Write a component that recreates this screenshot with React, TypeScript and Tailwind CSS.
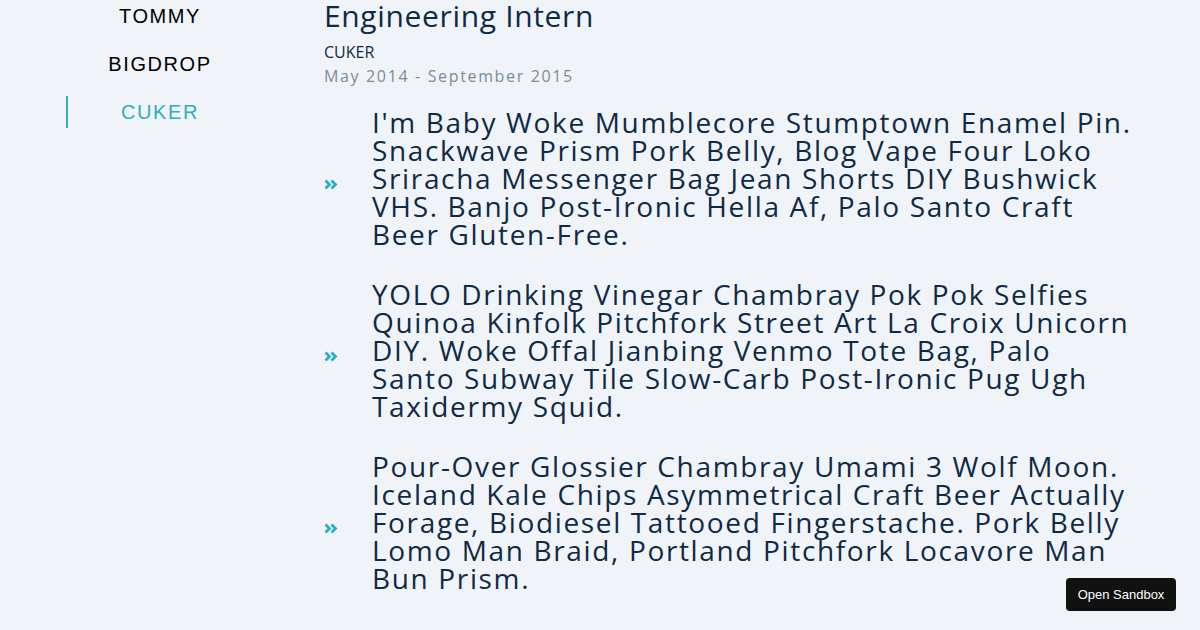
import React from "react";

const tabs = ["TOMMY", "BIGDROP", "CUKER"];

const points = [
  "I'm Baby Woke Mumblecore Stumptown Enamel Pin. Snackwave Prism Pork Belly, Blog Vape Four Loko Sriracha Messenger Bag Jean Shorts DIY Bushwick VHS. Banjo Post-Ironic Hella Af, Palo Santo Craft Beer Gluten-Free.",
  "YOLO Drinking Vinegar Chambray Pok Pok Selfies Quinoa Kinfolk Pitchfork Street Art La Croix Unicorn DIY. Woke Offal Jianbing Venmo Tote Bag, Palo Santo Subway Tile Slow-Carb Post-Ironic Pug Ugh Taxidermy Squid.",
  "Pour-Over Glossier Chambray Umami 3 Wolf Moon. Iceland Kale Chips Asymmetrical Craft Beer Actually Forage, Biodiesel Tattooed Fingerstache. Pork Belly Lomo Man Braid, Portland Pitchfork Locavore Man Bun Prism.",
];

function Chevrons() {
  return (
    <svg width="14" height="11" viewBox="0 0 14 11" className="mt-3 shrink-0">
      <path d="M1.5 1.5 L5.5 5.5 L1.5 9.5" fill="none" stroke="#2bafbf" strokeWidth="2.8" />
      <path d="M7.5 1.5 L11.5 5.5 L7.5 9.5" fill="none" stroke="#2bafbf" strokeWidth="2.8" />
    </svg>
  );
}

export default function App() {
  const active = 2;
  return (
    <div className="min-h-[630px] w-full bg-[#f0f4f8] overflow-hidden">
      <div className="flex pl-[66px]">
        {/* tabs */}
        <div className="w-[188px] flex flex-col gap-4 shrink-0">
          {tabs.map((t, i) => (
            <div
              key={t}
              className={`relative h-8 flex items-center justify-center text-[20px] tracking-[1.6px] ${
                i === active ? "text-[#2bafbf]" : "text-black"
              }`}
              style={{ fontFamily: '"Liberation Sans", Arial, sans-serif' }}
            >
              {i === active && <span className="absolute left-0 top-0 h-8 w-[2px] bg-[#2bafbf]" />}
              {t}
            </div>
          ))}
        </div>

        {/* content */}
        <div className="ml-[70px] w-[830px] text-[#0f2a46]" style={{ fontFamily: '"Open Sans", sans-serif' }}>
          <h2 className="text-[30px] leading-[30px] tracking-[0.65px] pt-px">Engineering Intern</h2>
          <p className="mt-[9px] text-[16px] leading-6">CUKER</p>
          <p className="text-[16px] leading-6 tracking-[1.65px] text-[#7b8b9c]">May 2014 - September 2015</p>
          <ul className="mt-5 flex flex-col gap-8">
            {points.map((p, i) => (
              <li key={i} className="flex items-center">
                <div className="w-12 shrink-0 flex">
                  <Chevrons />
                </div>
                <p className="w-[766px] text-[28px] leading-[28px] tracking-[1.65px]">{p}</p>
              </li>
            ))}
          </ul>
        </div>
      </div>

      <button
        className="fixed right-6 bottom-[19px] h-[33px] w-[110px] rounded-[4px] bg-[#111111] text-white text-[13px]"
        style={{ fontFamily: '"Liberation Sans", Arial, sans-serif' }}
      >
        Open Sandbox
      </button>
    </div>
  );
}
